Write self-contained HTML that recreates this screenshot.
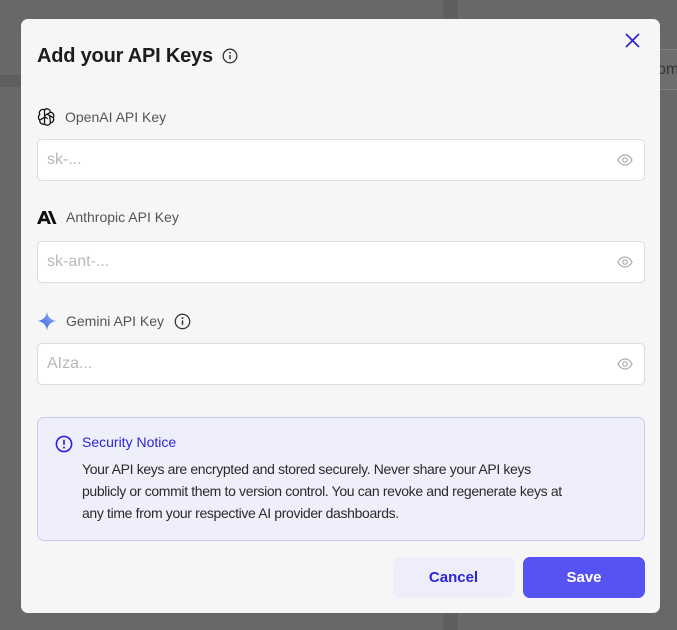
<!DOCTYPE html>
<html><head><meta charset="utf-8"><style>
*{box-sizing:border-box;margin:0;padding:0}
body{width:677px;height:630px;background:#686868;font-family:"Liberation Sans",sans-serif;position:relative;overflow:hidden}
.band{position:absolute;left:443px;top:0;width:15px;height:630px;background:#5f5f5f}
.hl{position:absolute;left:0;top:75px;width:443px;height:12px;background:#5f5f5f}
.rb{position:absolute;left:640px;top:49px;width:40px;height:41px;border-top:1px solid #808080;border-bottom:1px solid #808080;background:#6e6e6e;color:#333;font-size:16px;line-height:40px;padding-left:17px}
.modal{position:absolute;left:21px;top:19px;width:639px;height:594px;background:#f6f6f6;border-radius:7px}
h1{position:absolute;left:16px;top:26px;font-size:20px;font-weight:bold;color:#1c1c1c;letter-spacing:-0.2px}
.lbl{position:absolute;left:16px;font-size:14px;color:#555;display:flex;align-items:center}
.lbl svg{margin-right:9px}
.inp{position:absolute;left:16px;width:608px;height:42px;background:#fff;border:1px solid #dcdcdc;border-radius:5px;font-size:16px;color:#b8b8b8;padding-left:9px;line-height:40px}
.eye{position:absolute;right:11px;top:13px}
.note{position:absolute;left:16px;top:398px;width:608px;height:124px;background:#efeffc;border:1px solid #c9c9ef;border-radius:7px}
.note .t{position:absolute;left:44px;top:16px;color:#2b25d4;font-size:14px}
.note .b{position:absolute;left:44px;top:40px;white-space:nowrap;color:#2a2a2a;font-size:14px;line-height:22px;letter-spacing:-0.35px}
.btn{position:absolute;top:538px;height:41px;border-radius:7px;font-size:15px;font-weight:bold;text-align:center;line-height:41px}
</style></head><body>
<div class="band"></div><div class="hl"></div><div class="rb">om</div>
<div class="modal">
<h1>Add your API Keys <svg style="vertical-align:-2px;margin-left:4px" width="16" height="16" viewBox="0 0 16 16"><circle cx="8" cy="8" r="6.8" fill="none" stroke="#333" stroke-width="1.3"/><path d="M8 7v4.2" stroke="#333" stroke-width="1.5"/><circle cx="8" cy="4.8" r=".9" fill="#333"/></svg></h1>
<svg style="position:absolute;left:604px;top:14px" width="15" height="15" viewBox="0 0 15 15"><path d="M1 1L14 14M14 1L1 14" stroke="#2b25d4" stroke-width="1.7"/></svg>

<div class="lbl" style="top:88px"><svg width="19" height="19" viewBox="0 0 24 24" fill="none" stroke="#111" stroke-width="1.6"><path d="M9.5 3.5a4.5 4.5 0 0 1 7.5 3.2 4.5 4.5 0 0 1 3.6 6.8 4.5 4.5 0 0 1-3.6 6.5 4.5 4.5 0 0 1-7.5 1.5 4.5 4.5 0 0 1-6-5 4.5 4.5 0 0 1 0-7 4.5 4.5 0 0 1 6-6z"/><path d="M9.5 3.5v9l4 2.3M17 6.7l-7.5 4.3v0M20.6 13.5l-7.5-4.3M17 20l-1-8.5M9.5 21.5v-8.5M3.5 16.5l7.5-4.3"/></svg>OpenAI API Key</div>
<div class="inp" style="top:120px">sk-...<svg class="eye" width="16" height="14" viewBox="0 0 16 14"><path d="M1 7C3 3 5.5 2 8 2s5 1 7 5c-2 4-4.5 5-7 5S3 11 1 7z" fill="none" stroke="#aaa" stroke-width="1.2"/><circle cx="8" cy="7" r="2.2" fill="none" stroke="#aaa" stroke-width="1.2"/></svg></div>

<div class="lbl" style="top:190px"><svg width="20" height="15" viewBox="0 0 20 15"><path d="M5.5 1h3.2L14 14h-3.2l-1-2.7H4.4L3.3 14H0zM5.4 8.6h3.4L7.1 4.3zM11 1h3.2L19.5 14h-3.2z" fill="#111"/></svg>Anthropic API Key</div>
<div class="inp" style="top:222px">sk-ant-...<svg class="eye" width="16" height="14" viewBox="0 0 16 14"><path d="M1 7C3 3 5.5 2 8 2s5 1 7 5c-2 4-4.5 5-7 5S3 11 1 7z" fill="none" stroke="#aaa" stroke-width="1.2"/><circle cx="8" cy="7" r="2.2" fill="none" stroke="#aaa" stroke-width="1.2"/></svg></div>

<div class="lbl" style="top:292px"><svg width="20" height="20" viewBox="0 0 20 20"><defs><linearGradient id="g" x1="0" y1="1" x2="1" y2="0"><stop offset="0" stop-color="#2d5be0"/><stop offset="1" stop-color="#9db4f5"/></linearGradient></defs><path d="M10 0.5C10.6 6 14 9.4 19.5 10 14 10.6 10.6 14 10 19.5 9.4 14 6 10.6 0.5 10 6 9.4 9.4 6 10 0.5z" fill="url(#g)"/></svg>Gemini API Key<svg style="margin-left:10px" width="17" height="17" viewBox="0 0 16 16"><circle cx="8" cy="8" r="6.8" fill="none" stroke="#333" stroke-width="1.2"/><path d="M8 7v4.2" stroke="#333" stroke-width="1.4"/><circle cx="8" cy="4.8" r=".9" fill="#333"/></svg></div>
<div class="inp" style="top:324px">AIza...<svg class="eye" width="16" height="14" viewBox="0 0 16 14"><path d="M1 7C3 3 5.5 2 8 2s5 1 7 5c-2 4-4.5 5-7 5S3 11 1 7z" fill="none" stroke="#aaa" stroke-width="1.2"/><circle cx="8" cy="7" r="2.2" fill="none" stroke="#aaa" stroke-width="1.2"/></svg></div>

<div class="note">
<svg style="position:absolute;left:17px;top:17px" width="18" height="18" viewBox="0 0 18 18"><circle cx="9" cy="9" r="7.6" fill="none" stroke="#2b25d4" stroke-width="1.6"/><path d="M9 4.8v5" stroke="#2b25d4" stroke-width="1.7"/><circle cx="9" cy="12.6" r="1" fill="#2b25d4"/></svg>
<div class="t">Security Notice</div>
<div class="b">Your API keys are encrypted and stored securely. Never share your API keys<br>publicly or commit them to version control. You can revoke and regenerate keys at<br>any time from your respective AI provider dashboards.</div>
</div>
<div class="btn" style="left:372px;width:121px;background:#eeeefa;color:#2b25d4">Cancel</div>
<div class="btn" style="left:502px;width:122px;background:#5753f2;color:#fff">Save</div>
</div>
</body></html>
